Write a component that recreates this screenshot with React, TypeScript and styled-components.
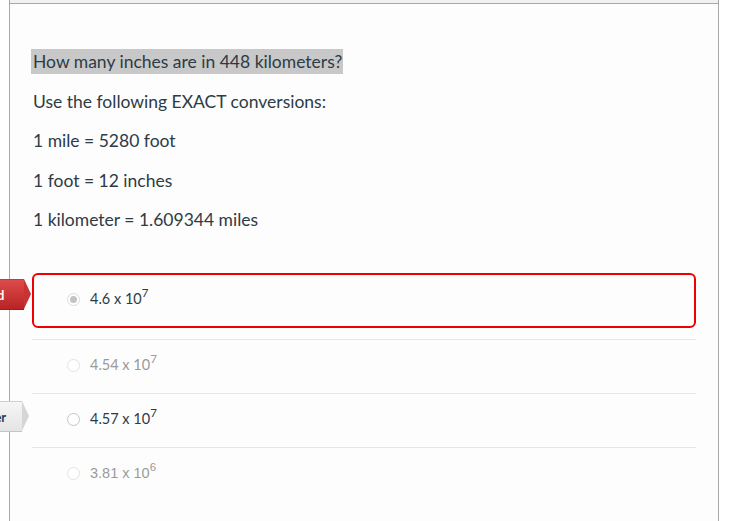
import React from "react";
import styled, { createGlobalStyle } from "styled-components";

const Global = createGlobalStyle`
  html, body { margin: 0; padding: 0; background: #ffffff; overflow: hidden; }
  body { font-family: Lato, "Open Sans", sans-serif; color: #2d3b45; }
`;

const Frame = styled.div`
  margin-left: 9px;
  width: 708px;
  min-height: 530px;
  border-left: 1px solid #a9a9a9;
  border-right: 1px solid #a9a9a9;
  background: #fdfdfd;
`;

const TopStrip = styled.div`
  height: 3px;
  background: #f1f1f1;
  border-bottom: 1px solid #a9a9a9;
`;

const Content = styled.div`
  padding: 45px 22px 0 22px;
`;

const Question = styled.div`
  display: flex;
  flex-direction: column;
  gap: 14.5px;
  font-size: 17.5px;
`;

const Para = styled.p`
  margin: 0;
  line-height: 25px;
  padding-left: 1px;
`;

const Highlight = styled.span`
  display: inline-block;
  background: #c8c8c8;
  padding: 0 1px 0 2px;
  margin-left: -2px;
`;

const Answers = styled.div`
  margin-top: 41px;
  display: flex;
  flex-direction: column;
`;

const Row = styled.div<{ $selected?: boolean }>`
  position: relative;
  display: flex;
  align-items: flex-start;
  gap: 10px;
  box-sizing: border-box;
  ${(p) =>
    p.$selected
      ? `
    height: 55px;
    border: 2px solid #ee0000;
    border-radius: 6px;
    padding: 15px 0 0 33px;
    margin-bottom: 11px;
  `
      : `
    height: 54px;
    border-top: 1px solid #e6e6e6;
    padding: 16px 0 0 35px;
  `}
`;

const Radio = styled.span<{ $checked?: boolean; $tone: string }>`
  box-sizing: border-box;
  width: 13px;
  height: 13px;
  margin-top: 3px;
  border-radius: 50%;
  border: 1px solid ${(p) => p.$tone};
  background: #fff;
  display: flex;
  align-items: center;
  justify-content: center;
  &::after {
    content: "";
    display: ${(p) => (p.$checked ? "block" : "none")};
    width: 7px;
    height: 7px;
    border-radius: 50%;
    background: #c4c4c4;
  }
`;

const AnswerText = styled.span<{ $color: string; $arial?: boolean }>`
  font-size: 14.5px;
  line-height: 18px;
  color: ${(p) => p.$color};
  font-family: ${(p) => (p.$arial ? '"Liberation Sans", Arial, sans-serif' : 'Lato, sans-serif')};
  sup {
    font-size: 11.5px;
    line-height: 0;
    position: relative;
    top: -1px;
    vertical-align: super;
  }
`;

const Tab = styled.div<{ $kind: "wrong" | "correct"; $top: number }>`
  position: absolute;
  left: -132px;
  top: ${(p) => p.$top}px;
  width: 122px;
  height: 31px;
  display: flex;
  align-items: center;
  justify-content: center;
  font-size: 13px;
  font-weight: bold;
  box-sizing: border-box;
  color: ${(p) => (p.$kind === "wrong" ? "#ffffff" : "#2d3b45")};
  background: ${(p) =>
    p.$kind === "wrong"
      ? "linear-gradient(#dd4a4a, #b82424)"
      : "linear-gradient(#f6f6f6, #e4e4e4)"};
  border-top: 1px solid ${(p) => (p.$kind === "wrong" ? "#c83a3a" : "#cfcfcf")};
  border-bottom: 1px solid ${(p) => (p.$kind === "wrong" ? "#962020" : "#c4c4c4")};
  &::after {
    content: "";
    position: absolute;
    right: -7px;
    top: -1px;
    width: 0;
    height: 0;
    border-top: 15.5px solid transparent;
    border-bottom: 15.5px solid transparent;
    border-left: 7px solid ${(p) => (p.$kind === "wrong" ? "#c83434" : "#d6d6d6")};
  }
`;

type Ans = {
  base: string;
  exp: string;
  color: string;
  radio: string;
  checked?: boolean;
  selected?: boolean;
  arial?: boolean;
  tab?: { kind: "wrong" | "correct"; label: string; top: number };
};

const answers: Ans[] = [
  {
    base: "4.6 x 10",
    exp: "7",
    color: "#2d3b45",
    radio: "#dcdcdc",
    checked: true,
    selected: true,
    tab: { kind: "wrong", label: "You Answered", top: 4 },
  },
  { base: "4.54 x 10", exp: "7", color: "#9a9a9a", radio: "#e2e2e2" },
  {
    base: "4.57 x 10",
    exp: "7",
    color: "#2d3b45",
    radio: "#c4c4c4",
    tab: { kind: "correct", label: "Correct Answer", top: 7 },
  },
  { base: "3.81 x 10", exp: "6", color: "#9a9a9a", radio: "#e2e2e2", arial: true },
];

export default function App() {
  return (
    <>
      <Global />
      <Frame>
        <TopStrip />
        <Content>
          <Question>
            <Para>
              <Highlight>How many inches are in 448 kilometers?</Highlight>
            </Para>
            <Para>Use the following EXACT conversions:</Para>
            <Para>1 mile = 5280 foot</Para>
            <Para>1 foot = 12 inches</Para>
            <Para>1 kilometer = 1.609344 miles</Para>
          </Question>
          <Answers>
            {answers.map((a, i) => (
              <Row key={i} $selected={a.selected}>
                {a.tab && (
                  <Tab $kind={a.tab.kind} $top={a.tab.top}>
                    {a.tab.label}
                  </Tab>
                )}
                <Radio $checked={a.checked} $tone={a.radio} />
                <AnswerText $color={a.color} $arial={a.arial}>
                  {a.base}
                  <sup>{a.exp}</sup>
                </AnswerText>
              </Row>
            ))}
          </Answers>
        </Content>
      </Frame>
    </>
  );
}
